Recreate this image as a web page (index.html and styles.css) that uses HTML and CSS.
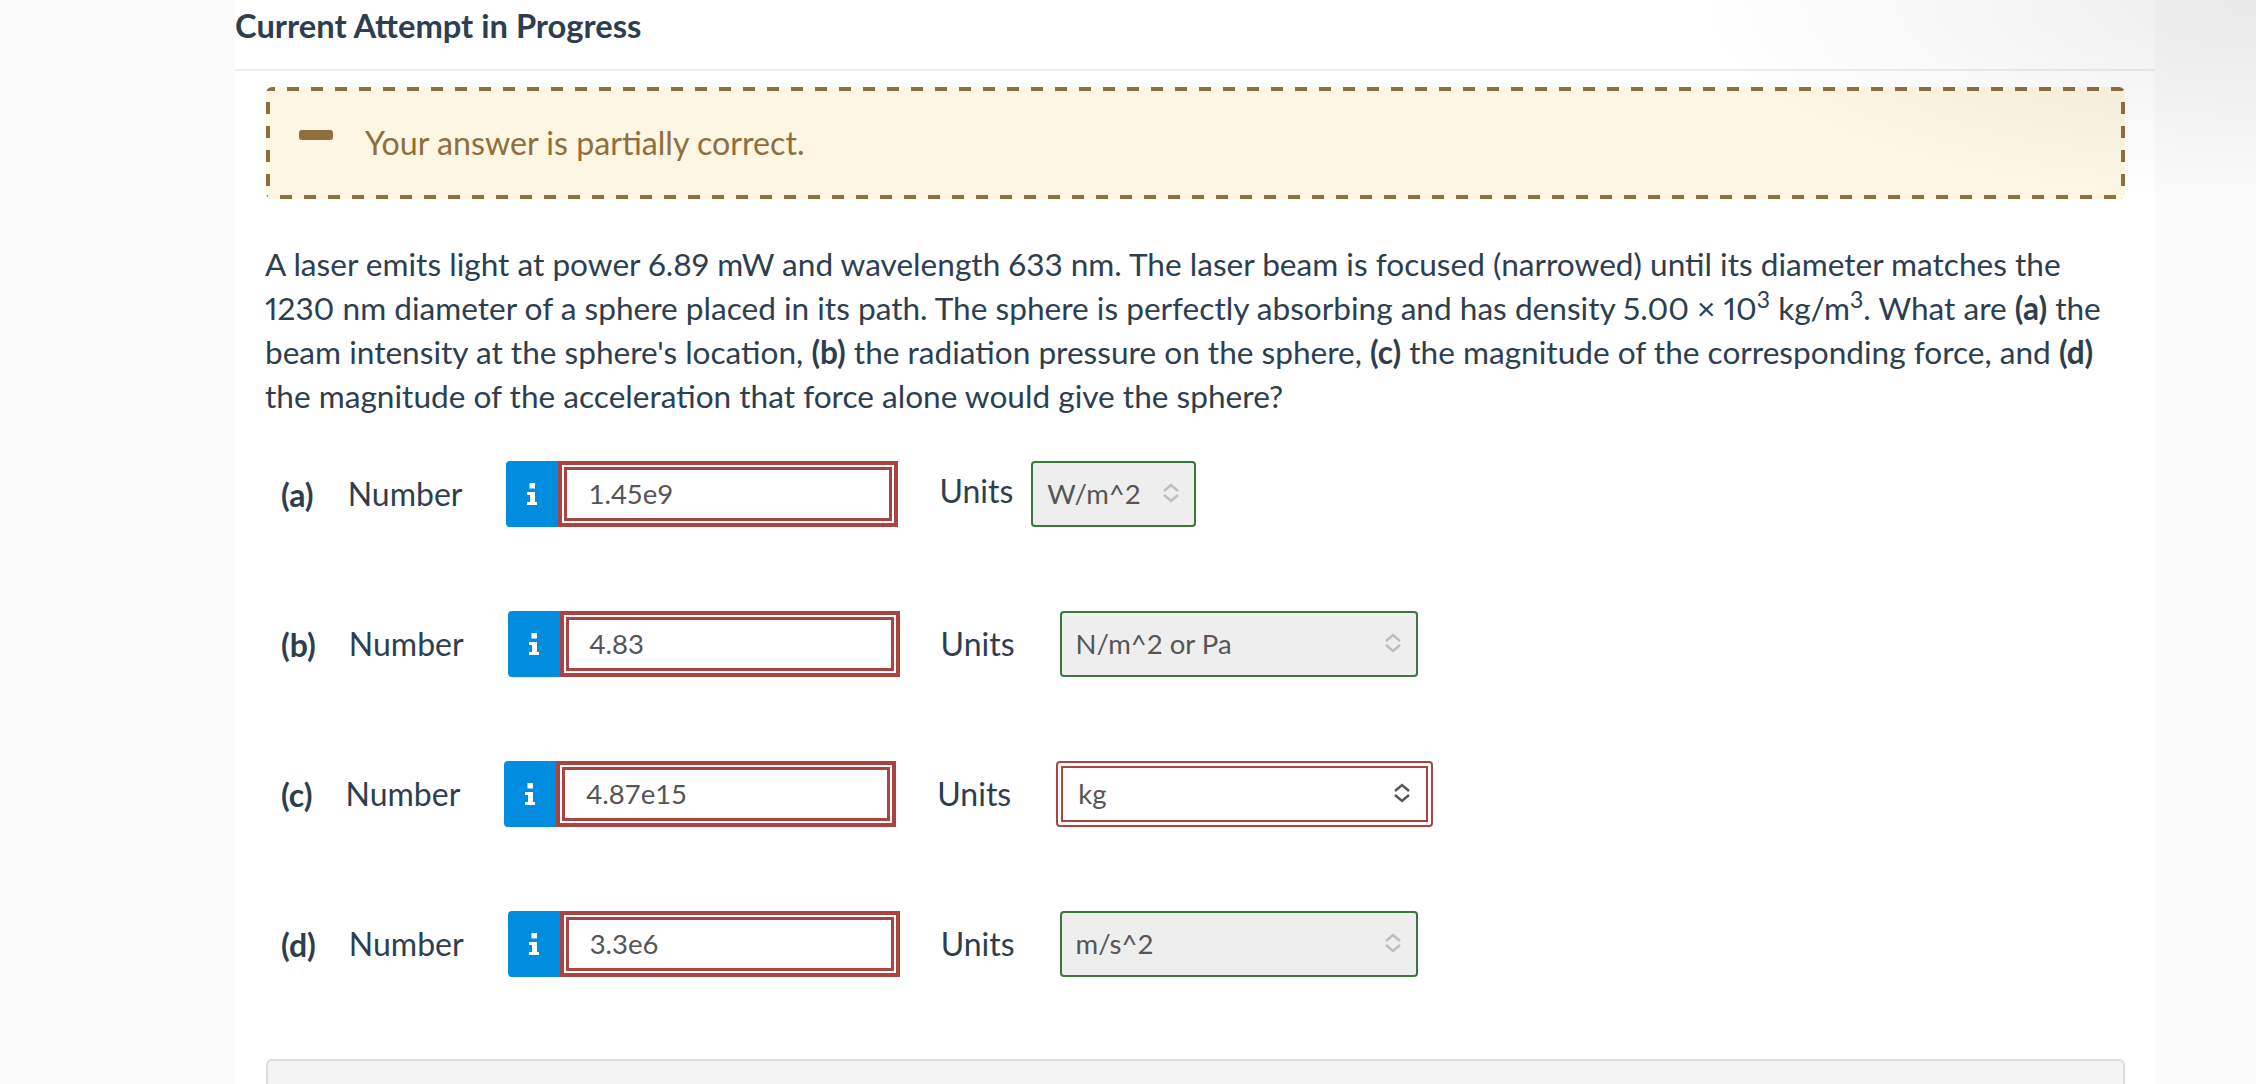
FILE: index.html
```html
<!DOCTYPE html>
<html lang="en">
  <head>
    <meta charset="UTF-8" />
    <meta name="viewport" content="width=device-width, initial-scale=1.0" />
    <title>Current Attempt in Progress</title>
    <link rel="stylesheet" href="styles.css">
  </head>
  <body>
    <div class="container">
      <h1 class="title">Current Attempt in Progress</h1>

      <div class="notice">
        <span class="notice-icon"></span>
        <p class="notice-text">Your answer is partially correct.</p>
      </div>

      <div class="question">
        <div class="question-line">A laser emits light at power 6.89 mW and wavelength 633 nm. The laser beam is focused (narrowed) until its diameter matches the</div>
        <div class="question-line">1230 nm diameter of a sphere placed in its path. The sphere is perfectly absorbing and has density 5.00 × 10<sup>3</sup> kg/m<sup>3</sup>. What are <strong>(a)</strong> the</div>
        <div class="question-line">beam intensity at the sphere's location, <strong>(b)</strong> the radiation pressure on the sphere, <strong>(c)</strong> the magnitude of the corresponding force, and <strong>(d)</strong></div>
        <div class="question-line">the magnitude of the acceleration that force alone would give the sphere?</div>
      </div>

      <div class="answers">
        <div class="answer">
          <strong class="part part-a">(a)</strong>
          <span class="label">Number</span>
          <span class="info">
            <svg width="10" height="22" viewBox="0 0 10 22"><path d="M2.5 0h5.500v5.500h-5.500zM0 9h8v10h2v3h-10v-3h3v-7h-3z" fill="#fff"/></svg>
          </span>
          <span class="field">1.45e9</span>
          <span class="label units units-raised">Units</span>
          <span class="select select-ok select-a">
            W/m^2
            <svg class="chevrons" width="18" height="20" viewBox="0 0 18 20"><path d="M2 8l7-6 7 6M2 12l7 6 7-6" fill="none" stroke="#bdbdbd" stroke-width="2.400"/></svg>
          </span>
        </div>

        <div class="answer">
          <strong class="part">(b)</strong>
          <span class="label">Number</span>
          <span class="info">
            <svg width="10" height="22" viewBox="0 0 10 22"><path d="M2.5 0h5.500v5.500h-5.500zM0 9h8v10h2v3h-10v-3h3v-7h-3z" fill="#fff"/></svg>
          </span>
          <span class="field">4.83</span>
          <span class="label units">Units</span>
          <span class="select select-ok select-wide">
            N/m^2 or Pa
            <svg class="chevrons" width="18" height="20" viewBox="0 0 18 20"><path d="M2 8l7-6 7 6M2 12l7 6 7-6" fill="none" stroke="#bdbdbd" stroke-width="2.400"/></svg>
          </span>
        </div>

        <div class="answer">
          <strong class="part">(c)</strong>
          <span class="label">Number</span>
          <span class="info">
            <svg width="10" height="22" viewBox="0 0 10 22"><path d="M2.5 0h5.500v5.500h-5.500zM0 9h8v10h2v3h-10v-3h3v-7h-3z" fill="#fff"/></svg>
          </span>
          <span class="field">4.87e15</span>
          <span class="label units">Units</span>
          <span class="select select-bad">
            kg
            <svg class="chevrons" width="18" height="20" viewBox="0 0 18 20"><path d="M2 8l7-6 7 6M2 12l7 6 7-6" fill="none" stroke="#555" stroke-width="2.400"/></svg>
          </span>
        </div>

        <div class="answer">
          <strong class="part">(d)</strong>
          <span class="label">Number</span>
          <span class="info">
            <svg width="10" height="22" viewBox="0 0 10 22"><path d="M2.5 0h5.500v5.500h-5.500zM0 9h8v10h2v3h-10v-3h3v-7h-3z" fill="#fff"/></svg>
          </span>
          <span class="field">3.3e6</span>
          <span class="label units">Units</span>
          <span class="select select-ok select-wide">
            m/s^2
            <svg class="chevrons" width="18" height="20" viewBox="0 0 18 20"><path d="M2 8l7-6 7 6M2 12l7 6 7-6" fill="none" stroke="#bdbdbd" stroke-width="2.400"/></svg>
          </span>
        </div>
      </div>

      <div class="next-box"></div>
    </div>
    <div class="corner-shade"></div>
  </body>
</html>
```

FILE: styles.css
```css
html,
body {
  height: 1084px;
  overflow: hidden;
}
body {
  font-family: Lato, "Open Sans", sans-serif;
  font-size: 32px;
  color: #2d3e4f;
  margin: 0;
  background-color: #fafafa;
}
.container {
  width: 1920px;
  height: 1084px;
  margin-left: 235px;
  background: white;
  overflow: hidden;
}
.title {
  height: 69px;
  margin: 0;
  font-size: 32.7px;
  font-weight: 700;
  line-height: 52px;
  border-bottom: 2px solid #eeeeee;
}
.notice {
  display: flex;
  align-items: center;
  height: 112px;
  margin: 16px 30px 0 31px;
  border-radius: 6px;
  color: #8f6f3e;
  background-color: #fcf6e2;
  background-image:
    linear-gradient(90deg, #8f6f3e 50%, transparent 50%),
    linear-gradient(90deg, #8f6f3e 50%, transparent 50%),
    linear-gradient(#8f6f3e 50%, transparent 50%),
    linear-gradient(#8f6f3e 50%, transparent 50%);
  background-size: 24px 4px, 24px 4px, 4px 24px, 4px 24px;
  background-position: 21px 0, 14px 100%, 0 15px, 100% 15px;
  background-repeat: repeat-x, repeat-x, repeat-y, repeat-y;
}
.notice-icon {
  width: 34px;
  height: 10px;
  margin: -16px 32px 0 33px;
  border-radius: 3px;
  background: #8f6f3e;
}
.notice-text {
  margin: 0 0 2px;
  font-size: 32.2px;
}
.question {
  margin: 43px 30px 0 30px;
  font-size: 31.6px;
  font-variant-numeric: proportional-nums;
  line-height: 44px;
}
.question-line {
  height: 44px;
  white-space: nowrap;
}
.question sup {
  font-size: 23px;
  line-height: 0;
}
.answers {
  display: flex;
  flex-direction: column;
  gap: 84px;
  margin: 43px 30px 82px 31px;
}
.answer {
  display: flex;
  align-items: center;
  height: 66px;
  padding-left: 15px;
}
.part {
  margin-right: 33px;
}
.part-a {
  margin-right: 34px;
}
.label {
  margin-right: 44px;
  padding-bottom: 2px;
}
.info {
  display: flex;
  align-items: center;
  justify-content: center;
  box-sizing: border-box;
  width: 52px;
  height: 66px;
  border-radius: 4px 0 0 4px;
  background: #008de0;
}
.field {
  box-sizing: border-box;
  display: flex;
  align-items: center;
  width: 340px;
  height: 66px;
  padding: 0 0 2px 26px;
  margin-right: 41px;
  font-size: 27.5px;
  color: #555555;
  border: 4px solid #a94442;
  outline: 3px solid #a94442;
  outline-offset: -9px;
}
.units {
  margin-right: 16px;
}
.units-raised {
  margin-top: -5px;
}
.select {
  box-sizing: border-box;
  display: flex;
  align-items: center;
  justify-content: space-between;
  height: 66px;
  padding-bottom: 2px;
  font-size: 27.5px;
  color: #555555;
  border-radius: 4px;
}
.select-ok {
  padding-left: 14px;
  padding-right: 14px;
  border: 2px solid #3c763d;
  background: #eeeeee;
}
.select-a {
  width: 165px;
  margin-left: 2px;
}
.select-wide {
  width: 358px;
  margin-left: 29px;
}
.select-bad {
  width: 377px;
  margin-left: 29px;
  padding-left: 20px;
  padding-right: 20px;
  border: 2px solid #a94442;
  outline: 2px solid #a94442;
  outline-offset: -7px;
}
.next-box {
  box-sizing: border-box;
  height: 120px;
  margin: 0 30px 0 31px;
  border: 2px solid #dddddd;
  border-radius: 6px;
  background: #f4f4f4;
}
.corner-shade {
  position: absolute;
  top: 0;
  right: 0;
  width: 560px;
  height: 200px;
  pointer-events: none;
  background: radial-gradient(ellipse 560px 200px at 100% 0, rgba(0, 0, 0, 0.07), rgba(0, 0, 0, 0));
}
```
